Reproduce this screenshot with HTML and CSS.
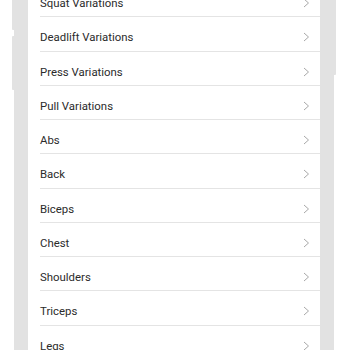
FILE: index.html
```html
<!DOCTYPE html>
<html>
<head>
<meta charset="utf-8">
<link rel="stylesheet" href="styles.css">
</head>
<body>
<div class="stage">
  <div class="gutter-left">
    <div class="lane">
      <div class="lane-top"></div>
      <div class="lane-mid"></div>
    </div>
    <div class="stripe"></div>
  </div>
  <div class="panel">
    <ul class="list">
      <li class="row"><span>Squat Variations</span><svg class="chev" viewBox="0 0 7 10"><path d="M1 1 L5.5 5 L1 9"/></svg></li>
      <li class="row"><span>Deadlift Variations</span><svg class="chev" viewBox="0 0 7 10"><path d="M1 1 L5.5 5 L1 9"/></svg></li>
      <li class="row"><span>Press Variations</span><svg class="chev" viewBox="0 0 7 10"><path d="M1 1 L5.5 5 L1 9"/></svg></li>
      <li class="row"><span>Pull Variations</span><svg class="chev" viewBox="0 0 7 10"><path d="M1 1 L5.5 5 L1 9"/></svg></li>
      <li class="row"><span>Abs</span><svg class="chev" viewBox="0 0 7 10"><path d="M1 1 L5.5 5 L1 9"/></svg></li>
      <li class="row"><span>Back</span><svg class="chev" viewBox="0 0 7 10"><path d="M1 1 L5.5 5 L1 9"/></svg></li>
      <li class="row"><span>Biceps</span><svg class="chev" viewBox="0 0 7 10"><path d="M1 1 L5.5 5 L1 9"/></svg></li>
      <li class="row"><span>Chest</span><svg class="chev" viewBox="0 0 7 10"><path d="M1 1 L5.5 5 L1 9"/></svg></li>
      <li class="row"><span>Shoulders</span><svg class="chev" viewBox="0 0 7 10"><path d="M1 1 L5.5 5 L1 9"/></svg></li>
      <li class="row"><span>Triceps</span><svg class="chev" viewBox="0 0 7 10"><path d="M1 1 L5.5 5 L1 9"/></svg></li>
      <li class="row"><span>Legs</span><svg class="chev" viewBox="0 0 7 10"><path d="M1 1 L5.5 5 L1 9"/></svg></li>
    </ul>
  </div>
  <div class="gutter-right">
    <div class="rstripe">
      <div class="rstripe-main"></div>
      <div class="rstripe-ext"></div>
    </div>
  </div>
</div>
</body>
</html>
```

FILE: styles.css
```css
html, body {
  margin: 0;
  padding: 0;
  background: #ffffff;
  width: 350px;
  height: 350px;
  overflow: hidden;
}

.stage {
  display: flex;
  height: 350px;
  font-family: Roboto, "Liberation Sans", sans-serif;
}

.gutter-left {
  display: flex;
  width: 28px;
  padding-left: 12px;
  box-sizing: border-box;
  flex: none;
}

.lane {
  width: 2px;
  display: flex;
  flex-direction: column;
}

.lane-top {
  height: 30px;
  background: #e2e2e2;
  border-bottom-left-radius: 1px;
}

.lane-mid {
  margin-top: 6px;
  height: 54px;
  background: #e2e2e2;
  border-radius: 1px 0 0 1px;
}

.stripe {
  width: 14px;
  background: #e2e2e2;
}

.panel {
  width: 292px;
  flex: none;
  overflow: hidden;
}

.list {
  list-style: none;
  margin: -16.9px 0 0 0;
  padding: 0 0 0 12px;
}

.row {
  display: flex;
  align-items: center;
  justify-content: space-between;
  height: 33.25px;
  box-sizing: content-box;
  border-bottom: 1px solid #e4e4e4;
  font-size: 11.4px;
  color: #2b2b2b;
  padding-right: 10px;
}

.row span {
  padding-top: 7px;
}

.chev {
  width: 7px;
  height: 10px;
  margin-top: 7px;
  fill: none;
  stroke: #a8a8a8;
  stroke-width: 1;
}

.gutter-right {
  flex: none;
  width: 30px;
}

.rstripe {
  display: flex;
  height: 350px;
}

.rstripe-main {
  width: 14px;
  background: #e2e2e2;
}

.rstripe-ext {
  width: 2px;
  height: 75px;
  background: #e2e2e2;
  border-bottom-right-radius: 1px;
}
```
